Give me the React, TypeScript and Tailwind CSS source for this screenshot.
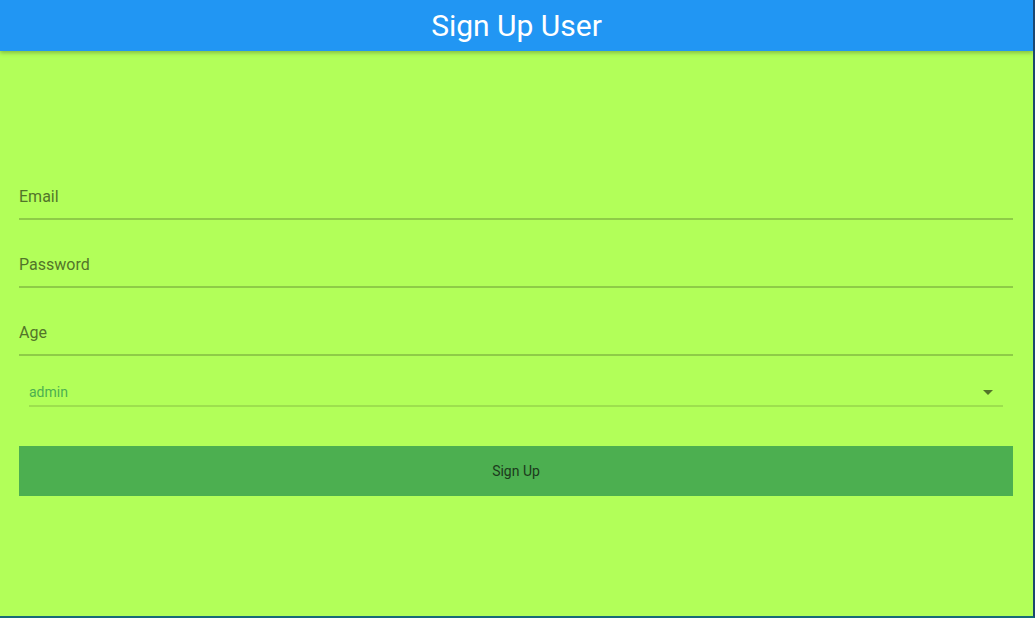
export default function App() {
  const fields = ['Email', 'Password', 'Age']

  return (
    <div className="h-[618px] w-[1035px] bg-[#b2ff59] border-r-2 border-b-2 border-r-[#1b4670] border-b-[#176a78] flex flex-col font-['Roboto',sans-serif] overflow-hidden">
      {/* Header */}
      <header className="h-[51px] bg-[#2196f3] flex items-center justify-center shadow-[0_2px_4px_rgba(0,0,0,0.25)] relative z-10 shrink-0">
        <h1 className="text-white text-[30px] leading-none">Sign Up User</h1>
      </header>

      {/* Form */}
      <div className="pl-[19px] pr-[20px] pt-[101px]">
        {fields.map((f) => (
          <div key={f} className="h-[68px] flex flex-col justify-end">
            <div className="border-b-2 border-[#8ecc47] pb-[13px] text-[16px] leading-none text-[#527529]">
              {f}
            </div>
          </div>
        ))}

        <div className="mx-[10px] mt-[26px] h-[25px] border-b-2 border-[#9de04e] flex items-center justify-between">
          <span className="text-[14px] leading-none text-[#4caf50] -mt-[4px]">admin</span>
          <svg width="24" height="24" viewBox="0 0 24 24" className="mr-[3px] -mt-[4px]">
            <path d="M7 10l5 5 5-5z" fill="#527529" />
          </svg>
        </div>

        <button className="mt-[39px] w-full h-[50px] bg-[#4caf50] text-[14px] text-[#1c3a1c]">
          Sign Up
        </button>
      </div>
    </div>
  )
}
